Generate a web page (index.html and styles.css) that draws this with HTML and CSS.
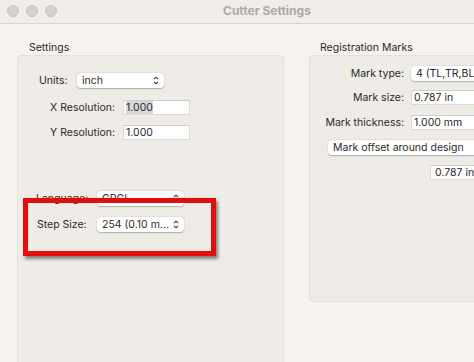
FILE: index.html
```html
<!DOCTYPE html>
<html lang="en">
<head>
    <meta charset="UTF-8">
    <meta name="viewport" content="width=device-width, initial-scale=1.0">
    <title>Cutter Settings</title>
    <link rel="stylesheet" href="styles.css">
</head>
<body>
    <div class="window">
        <header class="titlebar">
            <div class="lights"><span></span><span></span><span></span></div>
            <div class="title">Cutter Settings</div>
        </header>

        <div class="content">
            <!-- left group -->
            <section class="group group-settings">
                <div class="group-label">Settings</div>
                <div class="box">
                    <div class="row row-units">
                        <span class="label">Units:</span>
                        <div class="popup popup-units">
                            <span>inch</span>
                            <svg class="arrows" width="6" height="9" viewBox="0 0 6 9"><path d="M1 3.2 L3 1.2 L5 3.2 M1 5.8 L3 7.8 L5 5.8" fill="none" stroke="#333" stroke-width="1.1"/></svg>
                        </div>
                    </div>
                    <div class="row row-res">
                        <span class="label">X Resolution:</span>
                        <div class="field field-res"><span class="selected">1.000</span></div>
                    </div>
                    <div class="row row-res row-yres">
                        <span class="label">Y Resolution:</span>
                        <div class="field field-res">1.000</div>
                    </div>
                    <div class="row row-lang">
                        <span class="label">Language:</span>
                        <div class="popup popup-step">
                            <span>GPGL</span>
                            <svg class="arrows" width="6" height="9" viewBox="0 0 6 9"><path d="M1 3.2 L3 1.2 L5 3.2 M1 5.8 L3 7.8 L5 5.8" fill="none" stroke="#333" stroke-width="1.1"/></svg>
                        </div>
                    </div>
                    <div class="row row-step">
                        <span class="label">Step Size:</span>
                        <div class="popup popup-step">
                            <span>254 (0.10 m...</span>
                            <svg class="arrows" width="6" height="9" viewBox="0 0 6 9"><path d="M1 3.2 L3 1.2 L5 3.2 M1 5.8 L3 7.8 L5 5.8" fill="none" stroke="#333" stroke-width="1.1"/></svg>
                        </div>
                    </div>
                </div>
            </section>

            <!-- right group -->
            <section class="group group-marks">
                <div class="group-label">Registration Marks</div>
                <div class="box box-marks">
                    <div class="mrow mrow-first">
                        <span class="mlabel">Mark type:</span>
                        <div class="popup popup-wide"><span>4 (TL,TR,BL,BR)</span></div>
                    </div>
                    <div class="mrow">
                        <span class="mlabel">Mark size:</span>
                        <div class="field field-wide">0.787 in</div>
                    </div>
                    <div class="mrow">
                        <span class="mlabel">Mark thickness:</span>
                        <div class="field field-wide">1.000 mm</div>
                    </div>
                    <div class="mrow mrow-offset">
                        <div class="popup popup-offset"><span>Mark offset around design</span></div>
                    </div>
                    <div class="mrow mrow-value">
                        <div class="field field-offset">0.787 in</div>
                    </div>
                </div>
            </section>
        </div>

        <!-- annotation drawn over the screenshot -->
        <div class="highlight"></div>
    </div>
</body>
</html>
```

FILE: styles.css
```css
html, body {
    margin: 0;
    padding: 0;
}
body {
    width: 474px;
    height: 362px;
    overflow: hidden;
    background-color: #f6f3ee;
    font-family: Inter, "Noto Sans", sans-serif;
    font-size: 10.5px;
    color: #2b2a29;
}
.window {
    position: relative;
    width: 474px;
    height: 362px;
    overflow: hidden;
}
.titlebar {
    height: 23px;
    border-bottom: 1px solid #d9d6d1;
    background-color: #f1eee9;
    display: flex;
    align-items: center;
    position: relative;
}
.lights {
    display: flex;
    gap: 7px;
    padding-left: 7px;
    margin-top: -2px;
}
.lights span {
    width: 10px;
    height: 10px;
    border-radius: 50%;
    background-color: #d5d2ce;
    border: 1px solid #c9c6c2;
}
.title {
    position: absolute;
    left: 223px;
    top: 3px;
    font-weight: bold;
    font-size: 12px;
    color: #aeaaa6;
}
.content {
    display: flex;
    gap: 25px;
    padding-left: 17px;
}
.group-label {
    margin-top: 17px;
    height: 13px;
    line-height: 13px;
    margin-bottom: 1px;
    padding-left: 12px;
}
.group-marks .group-label {
    padding-left: 11px;
}
.box {
    background-color: #efece7;
    border: 1px solid #e4e1dc;
    border-radius: 4px;
}
.group-settings .box {
    width: 267px;
    height: 320px;
    padding-top: 17px;
    box-sizing: border-box;
}
.group-marks {
    flex-shrink: 0;
}
.box-marks {
    width: 200px;
    height: 247px;
    box-sizing: border-box;
    padding-top: 10px;
}

/* left rows */
.row {
    display: flex;
    align-items: center;
    height: 15px;
}
.row .label {
    white-space: nowrap;
}
.row-units {
    padding-left: 21px;
}
.row-units .label {
    width: 38px;
}
.row-res {
    margin-top: 12px;
}
.row-res .label {
    width: 97px;
    text-align: right;
    margin-right: 8px;
}
.row-yres {
    margin-top: 10px;
}
.row-lang {
    margin-top: 51px;
    padding-left: 18px;
}
.row-step {
    margin-top: 11px;
    padding-left: 19px;
}
.row-step .label {
    width: 60px;
}
.row-lang .label {
    width: 61px;
}

/* controls */
.popup {
    height: 15px;
    box-sizing: border-box;
    background-color: #fff;
    border-radius: 4px;
    box-shadow: 0 0.5px 1.5px rgba(0, 0, 0, 0.28);
    display: flex;
    align-items: center;
    justify-content: space-between;
    padding: 0 5px;
    white-space: nowrap;
    overflow: hidden;
}
.popup-units {
    width: 87px;
}
.popup-step {
    width: 87px;
}
.arrows {
    flex-shrink: 0;
}
.field {
    height: 15px;
    box-sizing: border-box;
    background-color: #fff;
    border: 1px solid #dcdad7;
    border-top-color: #cfcdca;
    padding: 0 2px;
    line-height: 13px;
    white-space: nowrap;
    overflow: hidden;
}
.field-res {
    width: 67px;
}
.selected {
    background-color: #d9d9d9;
}

/* right rows */
.mrow {
    display: flex;
    align-items: center;
    height: 15px;
    margin-top: 9px;
}
.mrow-first {
    margin-top: 0;
}
.mrow + .mrow + .mrow {
    margin-top: 10px;
}
.mlabel {
    width: 94px;
    text-align: right;
    margin-right: 7px;
    white-space: nowrap;
}
.popup-wide,
.field-wide {
    width: 90px;
}
.popup-wide {
    justify-content: flex-start;
}
.mrow-offset {
    padding-left: 18px;
}
.popup-offset {
    width: 160px;
    justify-content: flex-start;
}
.mrow-value {
    margin-top: 9px;
    padding-left: 120px;
}
.field-offset {
    width: 60px;
    padding-left: 4px;
}

/* red annotation box */
.highlight {
    position: absolute;
    left: 23px;
    top: 198px;
    width: 193px;
    height: 58px;
    box-sizing: border-box;
    border: 5px solid #e40c0c;
    box-shadow: 2px 3px 3px rgba(0, 0, 0, 0.45);
}
```
